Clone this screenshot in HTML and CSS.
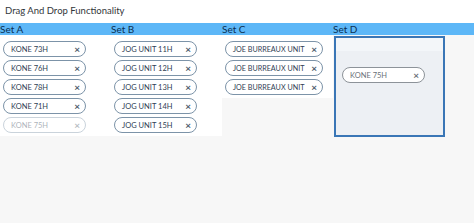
FILE: index.html
```html
<!DOCTYPE html>
<html lang="en">
  <head>
    <meta charset="UTF-8" />
    <meta name="viewport" content="width=device-width, initial-scale=1.0" />
    <title>Drag And Drop</title>
    <link rel="stylesheet" href="styles.css">
  </head>
  <body>
    <div class="page-title">Drag And Drop Functionality</div>
    <div class="set-heads">
      <div class="set-head">Set A</div>
      <div class="set-head">Set B</div>
      <div class="set-head">Set C</div>
      <div class="set-head">Set D</div>
    </div>
    <div class="sets">
      <div class="set-list">
        <div class="chip"><span>KONE 73H</span><span class="close">&times;</span></div>
        <div class="chip"><span>KONE 76H</span><span class="close">&times;</span></div>
        <div class="chip"><span>KONE 78H</span><span class="close">&times;</span></div>
        <div class="chip"><span>KONE 71H</span><span class="close">&times;</span></div>
        <div class="chip dragging"><span>KONE 75H</span><span class="close">&times;</span></div>
      </div>
      <div class="set-list">
        <div class="chip"><span>JOG UNIT 11H</span><span class="close">&times;</span></div>
        <div class="chip"><span>JOG UNIT 12H</span><span class="close">&times;</span></div>
        <div class="chip"><span>JOG UNIT 13H</span><span class="close">&times;</span></div>
        <div class="chip"><span>JOG UNIT 14H</span><span class="close">&times;</span></div>
        <div class="chip"><span>JOG UNIT 15H</span><span class="close">&times;</span></div>
      </div>
      <div class="set-list wide">
        <div class="chip"><span>JOE BURREAUX UNIT</span><span class="close">&times;</span></div>
        <div class="chip"><span>JOE BURREAUX UNIT</span><span class="close">&times;</span></div>
        <div class="chip"><span>JOE BURREAUX UNIT</span><span class="close">&times;</span></div>
      </div>
      <div class="drop-zone">
        <div class="drop-top"></div>
        <div class="chip ghost"><span>KONE 75H</span><span class="close">&times;</span></div>
      </div>
    </div>
  </body>
</html>
```

FILE: styles.css
```css
* {
  box-sizing: border-box;
}
body {
  margin: 0;
  background-color: #f7f7f7;
  font-family: Lato, "Open Sans", sans-serif;
  color: #32363a;
}
.page-title {
  height: 23px;
  padding: 4px 0 0 5px;
  background-color: #fff;
  font-size: 9.5px;
  line-height: 13px;
}
.set-heads {
  display: grid;
  grid-template-columns: repeat(4, 111px);
  height: 12px;
  background-color: #5db7f7;
}
.set-head {
  font-size: 10px;
  line-height: 12px;
  color: #0b2f52;
}
.sets {
  display: grid;
  grid-template-columns: repeat(4, 111px);
  align-items: start;
}
.set-list {
  display: flex;
  flex-direction: column;
  gap: 3px;
  padding: 6px 0 3px 3px;
  background-color: #fff;
}
.chip {
  display: flex;
  align-items: center;
  justify-content: space-between;
  width: 83px;
  height: 16px;
  padding: 0 5px 0 7px;
  border: 1px solid #7c93a8;
  border-radius: 8px;
  background-color: #fff;
  font-size: 7.5px;
  color: #2f4053;
}
.wide .chip {
  width: 98px;
  font-size: 7.2px;
}
.close {
  font-size: 10px;
  font-weight: bold;
  color: #4c5b6a;
  line-height: 10px;
}
.dragging {
  opacity: 0.4;
}
.drop-zone {
  width: 111px;
  height: 101px;
  margin: 1px 0 0 1px;
  border: 2px solid #3a76b6;
  background-color: #edf0f4;
}
.drop-top {
  height: 13px;
  background-color: #f3f6f9;
}
.ghost {
  width: 83px;
  margin: 16px 0 0 6px;
  border: 1.5px solid #8d9399;
  color: #6a7178;
}
.ghost .close {
  color: #6a7178;
}
```
